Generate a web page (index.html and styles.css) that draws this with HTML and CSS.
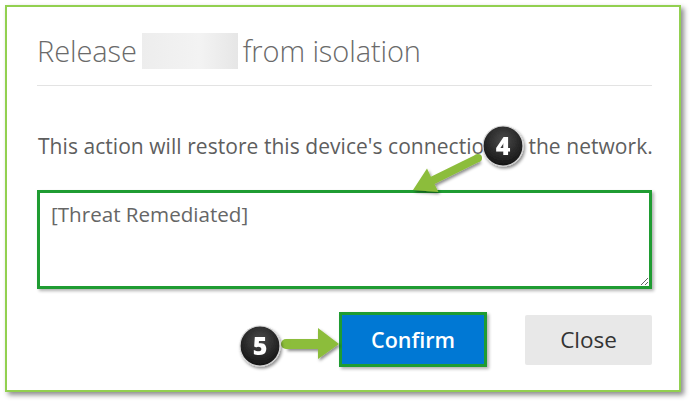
FILE: index.html
```html
<!DOCTYPE html>
<html lang="en">
<head>
<meta charset="utf-8">
<title>Release from isolation</title>
<link rel="stylesheet" href="styles.css">
</head>
<body>
<div class="frame">
  <div class="dialog">
    <h1 class="title"><span>Release</span><span class="redact"></span><span>from isolation</span></h1>
    <div class="divider"></div>
    <p class="msg">This action will restore this device's connection to the network.</p>
    <textarea class="comment">[Threat Remediated]</textarea>
    <div class="actions">
      <button class="btn primary">Confirm</button>
      <button class="btn secondary">Close</button>
    </div>
  </div>
</div>
<svg class="annot" width="696" height="406" viewBox="0 0 696 406">
  <defs>
    <radialGradient id="bg" cx="50%" cy="35%" r="65%">
      <stop offset="0" stop-color="#4a4a4a"/>
      <stop offset="1" stop-color="#141414"/>
    </radialGradient>
    <filter id="sh" x="-30%" y="-30%" width="160%" height="160%">
      <feDropShadow dx="1.5" dy="2" stdDeviation="1.5" flood-color="#000" flood-opacity="0.45"/>
    </filter>
  </defs>
  <polygon filter="url(#sh)" fill="#8cbd3a" points="476.2,154.4 430.9,176.7 427,168.6 413,190 438.4,192 434.5,183.9 479.8,161.6"/>
  <circle cx="478" cy="158" r="4" fill="#8cbd3a"/>
  <polygon filter="url(#sh)" fill="#8cbd3a" points="286,339 318,339 318,328 339,344 318,359 318,349 286,349"/>
  <circle cx="286" cy="344" r="5" fill="#8cbd3a"/>
  <g filter="url(#sh)">
    <circle cx="503" cy="146" r="20" fill="url(#bg)" stroke="#d8d8d8" stroke-width="1.2"/>
    <text x="503" y="155" class="num">4</text>
  </g>
  <g filter="url(#sh)">
    <circle cx="260" cy="346" r="20" fill="url(#bg)" stroke="#d8d8d8" stroke-width="1.2"/>
    <text x="260" y="355" class="num">5</text>
  </g>
</svg>
</body>
</html>
```
FILE: styles.css
```css
html, body {
  margin: 0;
  padding: 0;
  background: #ffffff;
}
body {
  width: 696px;
  height: 406px;
  position: relative;
  overflow: hidden;
  font-family: "Open Sans", "Noto Sans", sans-serif;
}
.frame {
  margin: 5px 0 0 5px;
  width: 672px;
  height: 383px;
  border: 2px solid #92d050;
  background: #fff;
  box-shadow: 3px 3px 5px rgba(0, 0, 0, 0.45);
}
.dialog {
  display: flex;
  flex-direction: column;
  padding: 26px 27px 0 30px;
}
.title {
  margin: 0;
  display: flex;
  align-items: center;
  gap: 5px;
  font-weight: 300;
  font-size: 29px;
  line-height: 36px;
  color: #6a6a6a;
  letter-spacing: -0.1px;
}
.redact {
  display: inline-block;
  width: 96px;
  height: 36px;
  background: linear-gradient(90deg, #ededed, #f3f3f3 60%, #e6e6e6);
}
.divider {
  height: 1px;
  background: #e3e3e3;
  margin-top: 16px;
}
.msg {
  margin: 46px 0 0 1px;
  font-size: 21px;
  line-height: 28px;
  color: #5e5e5e;
  letter-spacing: 0.05px;
  white-space: nowrap;
}
.comment {
  margin-top: 30px;
  height: 99px;
  box-sizing: border-box;
  border: 3px solid #1f9c32;
  padding: 7px 11px;
  font-family: inherit;
  font-size: 20.6px;
  color: #666;
  resize: vertical;
  outline: none;
  box-shadow: 2px 2px 3px rgba(0, 0, 0, 0.3);
}
.actions {
  display: flex;
  justify-content: flex-end;
  align-items: center;
  gap: 38px;
  margin-top: 23px;
}
.btn {
  font-family: inherit;
  border: none;
  cursor: pointer;
}
.primary {
  width: 148px;
  height: 55px;
  background: #0078d4;
  color: #fff;
  font-size: 21.5px;
  font-weight: 600;
  border: 3px solid #1f9c32;
  box-shadow: 2px 2px 3px rgba(0, 0, 0, 0.3);
}
.secondary {
  width: 127px;
  height: 50px;
  background: #e8e8e8;
  color: #333;
  font-size: 22.5px;
  border-radius: 2px;
}
.annot {
  position: absolute;
  left: 0;
  top: 0;
  pointer-events: none;
}
.num {
  font-family: "Open Sans", "DejaVu Sans", sans-serif;
  font-weight: 800;
  font-size: 25px;
  fill: #fff;
  text-anchor: middle;
}
```
